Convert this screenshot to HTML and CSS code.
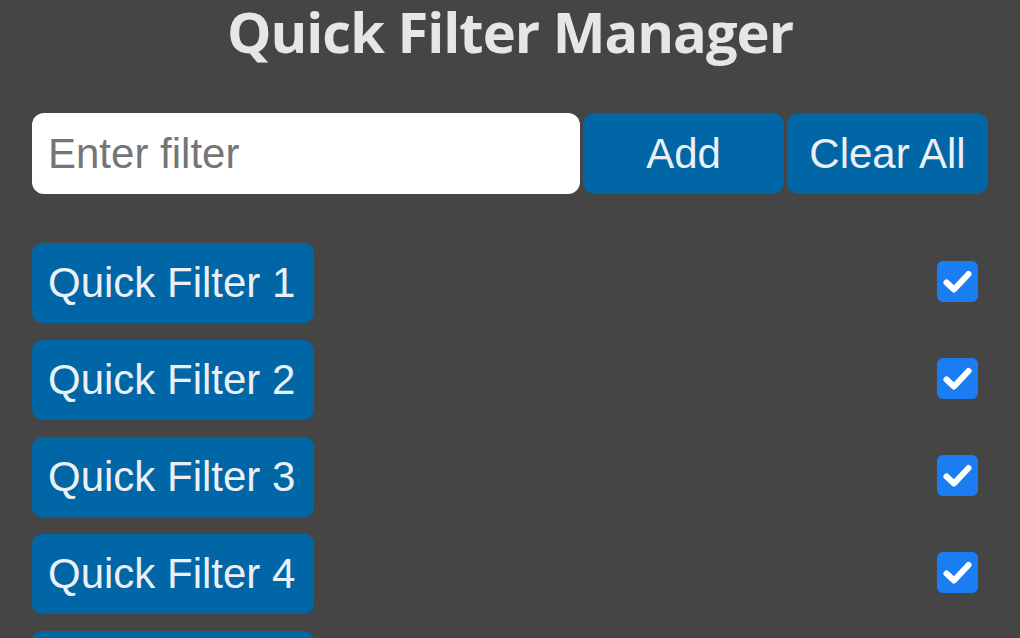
FILE: index.html
```html
<!DOCTYPE html>
<html lang="en">
<head>
<meta charset="utf-8">
<title>Quick Filter Manager</title>
<link rel="stylesheet" href="styles.css">
</head>
<body>
<main class="app">
  <h1 class="title">Quick Filter Manager</h1>
  <div class="controls">
    <input class="filter-input" type="text" placeholder="Enter filter">
    <button class="btn">Add</button>
    <button class="btn">Clear All</button>
  </div>
  <ul class="filters">
    <li class="filter-row">
      <span class="filter-tag">Quick Filter 1</span>
      <span class="check"><svg viewBox="0 0 41 41" width="41" height="41"><path d="M9.5 21.5 L17 28.5 L31.5 13" fill="none" stroke="#fff" stroke-width="6" stroke-linecap="round" stroke-linejoin="round"/></svg></span>
    </li>
    <li class="filter-row">
      <span class="filter-tag">Quick Filter 2</span>
      <span class="check"><svg viewBox="0 0 41 41" width="41" height="41"><path d="M9.5 21.5 L17 28.5 L31.5 13" fill="none" stroke="#fff" stroke-width="6" stroke-linecap="round" stroke-linejoin="round"/></svg></span>
    </li>
    <li class="filter-row">
      <span class="filter-tag">Quick Filter 3</span>
      <span class="check"><svg viewBox="0 0 41 41" width="41" height="41"><path d="M9.5 21.5 L17 28.5 L31.5 13" fill="none" stroke="#fff" stroke-width="6" stroke-linecap="round" stroke-linejoin="round"/></svg></span>
    </li>
    <li class="filter-row">
      <span class="filter-tag">Quick Filter 4</span>
      <span class="check"><svg viewBox="0 0 41 41" width="41" height="41"><path d="M9.5 21.5 L17 28.5 L31.5 13" fill="none" stroke="#fff" stroke-width="6" stroke-linecap="round" stroke-linejoin="round"/></svg></span>
    </li>
    <li class="filter-row">
      <span class="filter-tag">Quick Filter 5</span>
      <span class="check"><svg viewBox="0 0 41 41" width="41" height="41"><path d="M9.5 21.5 L17 28.5 L31.5 13" fill="none" stroke="#fff" stroke-width="6" stroke-linecap="round" stroke-linejoin="round"/></svg></span>
    </li>
  </ul>
</main>
</body>
</html>
```

FILE: styles.css
```css
html, body {
  margin: 0;
  padding: 0;
  background: #454545;
  overflow: hidden;
}

.app {
  padding: 0 32px;
  font-family: "Liberation Sans", Arial, sans-serif;
}

.title {
  margin: 0;
  height: 113px;
  box-sizing: border-box;
  text-align: center;
  font-family: "Open Sans", sans-serif;
  font-weight: 700;
  font-size: 56px;
  line-height: 62px;
  letter-spacing: -1px;
  color: #e6e6e6;
}

.controls {
  display: flex;
  gap: 3px;
  height: 81px;
}

.filter-input {
  flex: 1;
  min-width: 0;
  margin: 0;
  border: none;
  border-radius: 12px;
  background: #fff;
  padding: 0 16px;
  font-family: "Liberation Sans", Arial, sans-serif;
  font-size: 42px;
  color: #333;
  outline: none;
}

.filter-input::placeholder {
  color: #757575;
}

.btn {
  width: 201px;
  margin: 0;
  border: none;
  border-radius: 12px;
  background: #0066a5;
  color: #eaf0f6;
  font-family: "Liberation Sans", Arial, sans-serif;
  font-size: 42px;
  padding: 0;
  cursor: pointer;
}

.filters {
  list-style: none;
  margin: 49px 0 0;
  padding: 0;
  display: flex;
  flex-direction: column;
  gap: 17px;
}

.filter-row {
  display: flex;
  align-items: center;
  justify-content: space-between;
  padding-right: 10px;
}

.filter-tag {
  display: inline-flex;
  align-items: center;
  height: 80px;
  padding: 0 19px 0 16px;
  border-radius: 10px;
  background: #0066a5;
  color: #eaf0f6;
  font-size: 42px;
}

.check {
  display: block;
  width: 41px;
  height: 41px;
  border-radius: 6px;
  background: #1a7ef2;
  margin-top: -3px;
}

.check svg {
  display: block;
}
```
